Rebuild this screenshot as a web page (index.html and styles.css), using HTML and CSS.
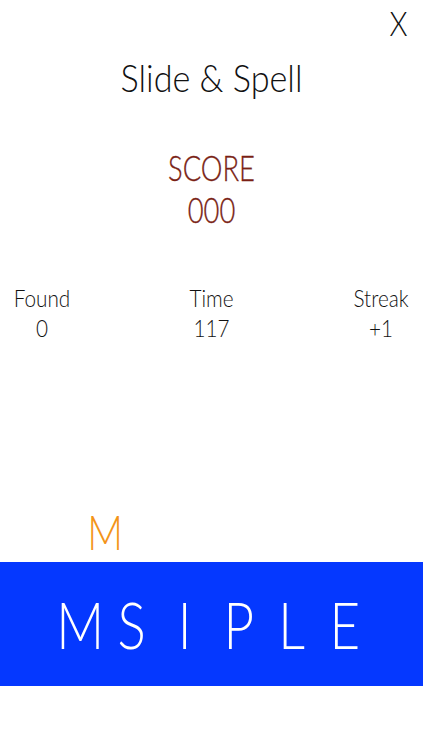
FILE: index.html
```html
<!DOCTYPE html>
<html lang="en">
<head>
<meta charset="utf-8">
<title>Slide &amp; Spell</title>
<link rel="stylesheet" href="styles.css">
</head>
<body>
<div class="screen">
  <div class="topbar"><span class="close">X</span></div>
  <h1 class="title">Slide &amp; Spell</h1>
  <div class="score">
    <div class="score-label">SCORE</div>
    <div class="score-value">000</div>
  </div>
  <div class="stats">
    <div class="stat"><div class="stat-label">Found</div><div class="stat-value">0</div></div>
    <div class="stat"><div class="stat-label">Time</div><div class="stat-value">117</div></div>
    <div class="stat"><div class="stat-label">Streak</div><div class="stat-value">+1</div></div>
  </div>
  <div class="drag-row"><span class="drag-letter">M</span></div>
  <div class="tiles">
    <span class="tile">M</span>
    <span class="tile">S</span>
    <span class="tile">I</span>
    <span class="tile">P</span>
    <span class="tile">L</span>
    <span class="tile">E</span>
  </div>
</div>
</body>
</html>
```
FILE: styles.css
```css
html, body {
  margin: 0;
  padding: 0;
  background: #ffffff;
}
body {
  font-family: "Lato", "Open Sans", sans-serif;
  font-weight: 300;
  color: #111111;
}
.screen {
  width: 423px;
  height: 750px;
  display: flex;
  flex-direction: column;
}
.topbar {
  display: flex;
  justify-content: flex-end;
  padding: 3px 14px 0 0;
  height: 40px;
}
.close {
  font-size: 34px;
  line-height: 40px;
  transform: scaleX(0.85);
}
.title {
  margin: 11px 0 0 0;
  font-size: 38px;
  line-height: 46px;
  font-weight: 300;
  text-align: center;
  transform: scaleX(0.9);
}
.score {
  margin-top: 46px;
  text-align: center;
  color: #7a1f15;
}
.score-label, .score-value {
  font-size: 36px;
  font-weight: 300;
  line-height: 42px;
  transform: scaleX(0.76);
  -webkit-text-stroke: 0.35px #7a1f15;
}
.stats {
  margin-top: 53px;
  display: grid;
  grid-template-columns: 84px 1fr 84px;
  font-size: 23px;
  line-height: 30px;
  text-align: center;
}
.stat {
  transform: scaleX(0.9);
}
.drag-row {
  margin-top: 161px;
  height: 58px;
  padding-left: 78px;
}
.drag-letter {
  display: block;
  width: 54px;
  text-align: center;
  font-size: 48px;
  line-height: 56px;
  color: #f39419;
  transform: scaleX(0.82);
}
.tiles {
  height: 124px;
  background: #0538ff;
  display: flex;
  justify-content: center;
}
.tile {
  width: 53.4px;
  text-align: center;
  color: #ffffff;
  font-size: 66px;
  line-height: 124px;
  transform: scaleX(0.8);
}
```
